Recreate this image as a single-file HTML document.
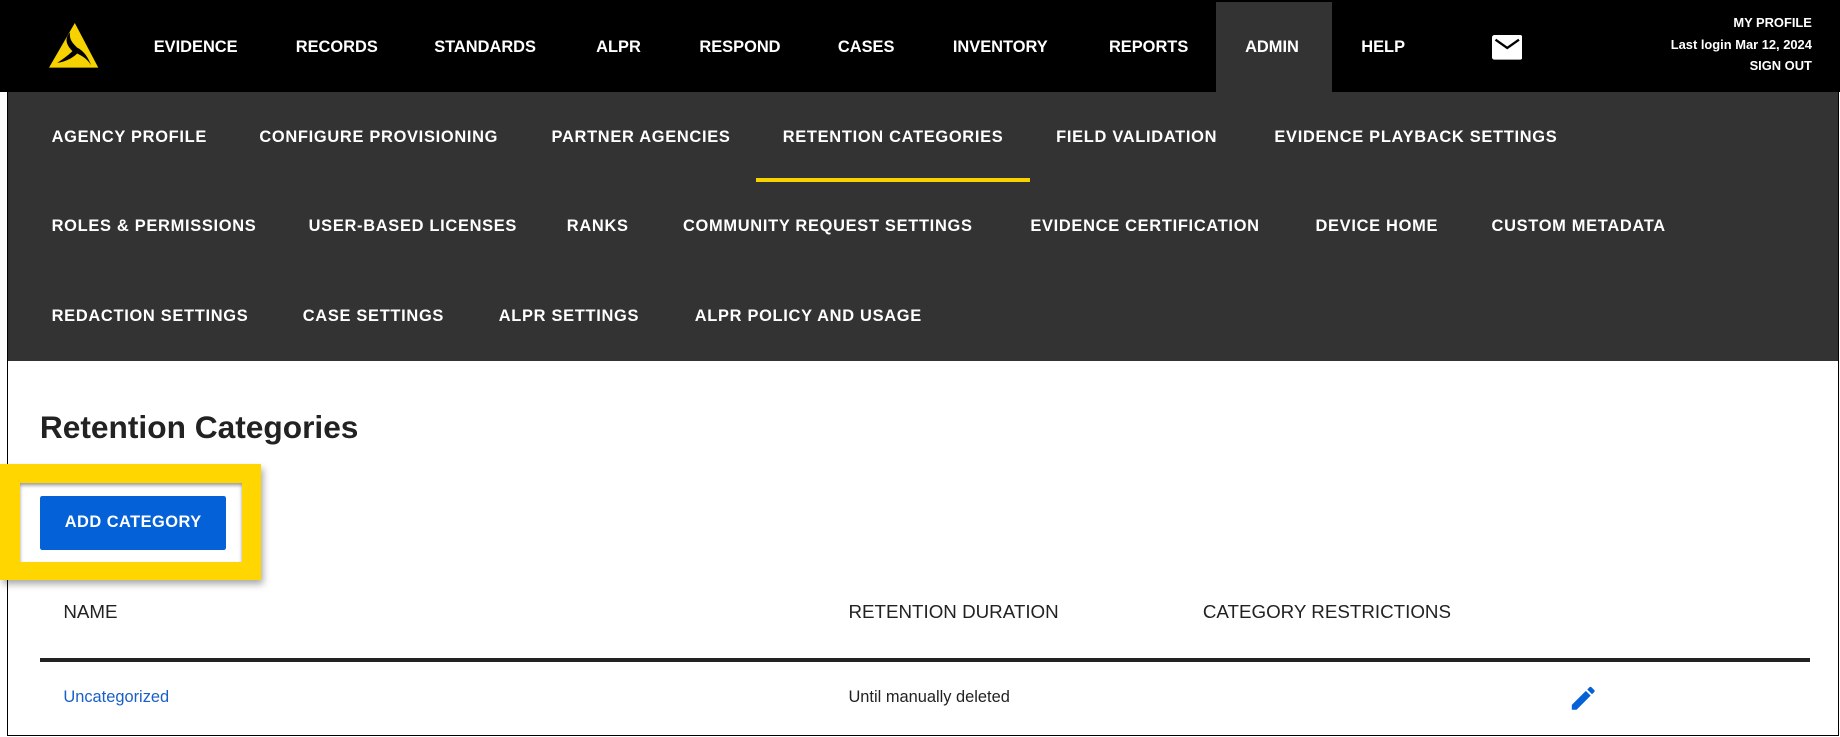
<!DOCTYPE html>
<html><head><meta charset="utf-8">
<style>
html,body{margin:0;padding:0;background:#fff;width:1840px;height:737px;overflow:hidden}
#w{zoom:1.1735;width:1568px;height:628px;position:relative;font-family:"Liberation Sans",Arial,sans-serif}
.abs{position:absolute;white-space:nowrap}
#top{position:absolute;left:0;top:0;width:1568px;height:78px;background:#000}
.tn{position:absolute;top:32px;color:#fff;font-weight:bold;font-size:14px;line-height:16px}
#admin{position:absolute;left:1036px;top:2px;width:99px;height:76px;background:#333}
#sub{position:absolute;left:7px;top:78px;width:1559px;height:230px;background:#333}
.sn{position:absolute;color:#fff;font-weight:bold;font-size:14px;letter-spacing:.6px;line-height:16px}
#frame{position:absolute;left:6px;top:0;width:1559px;height:626px;border:1.5px solid #000;border-top:none}
.pr{position:absolute;right:24px;color:#fff;font-weight:bold;font-size:11px;line-height:12px;text-align:right}
</style></head><body><div id="w">
<div id="frame"></div>
<div id="top"></div>
<div id="admin"></div>
<svg class="abs" style="left:42px;top:20px" width="42" height="38" viewBox="0 0 42 38">
<polygon points="22,0 0,38 42,38" fill="#f6d200"/>
<path d="M18,8 C12,14 16,20 20,24 C16,28 10,32 7,34 C14,33 20,30 24,26 C28,28 32,30 36,36 C33,29 30,24 24,21 C20,17 17,14 18,8 Z" fill="#000"/>
</svg>
<div class="tn" style="left:131px">EVIDENCE</div>
<div class="tn" style="left:252px">RECORDS</div>
<div class="tn" style="left:370px">STANDARDS</div>
<div class="tn" style="left:508px">ALPR</div>
<div class="tn" style="left:596px">RESPOND</div>
<div class="tn" style="left:714px">CASES</div>
<div class="tn" style="left:812px">INVENTORY</div>
<div class="tn" style="left:945px">REPORTS</div>
<div class="tn" style="left:1061px">ADMIN</div>
<div class="tn" style="left:1160px">HELP</div>
<svg class="abs" style="left:1271px;top:30px" width="26" height="21" viewBox="0 0 26 21"><rect width="26" height="21" rx="2" fill="#fff"/><path d="M3,4 L13,11 L23,4" stroke="#000" stroke-width="2" fill="none"/></svg>
<div class="pr" style="top:14px">MY PROFILE</div>
<div class="pr" style="top:32px">Last login Mar 12, 2024</div>
<div class="pr" style="top:50px">SIGN OUT</div>
<div id="sub"></div>
<div class="sn" style="left:44px;top:109px">AGENCY PROFILE</div>
<div class="sn" style="left:221px;top:109px">CONFIGURE PROVISIONING</div>
<div class="sn" style="left:470px;top:109px">PARTNER AGENCIES</div>
<div class="sn" style="left:667px;top:109px">RETENTION CATEGORIES</div>
<div class="sn" style="left:900px;top:109px">FIELD VALIDATION</div>
<div class="sn" style="left:1086px;top:109px">EVIDENCE PLAYBACK SETTINGS</div>
<div class="abs" style="left:644px;top:152px;width:234px;height:3px;background:#f6d200"></div>
<div class="sn" style="left:44px;top:185px">ROLES &amp; PERMISSIONS</div>
<div class="sn" style="left:263px;top:185px">USER-BASED LICENSES</div>
<div class="sn" style="left:483px;top:185px">RANKS</div>
<div class="sn" style="left:582px;top:185px">COMMUNITY REQUEST SETTINGS</div>
<div class="sn" style="left:878px;top:185px">EVIDENCE CERTIFICATION</div>
<div class="sn" style="left:1121px;top:185px">DEVICE HOME</div>
<div class="sn" style="left:1271px;top:185px">CUSTOM METADATA</div>
<div class="sn" style="left:44px;top:262px">REDACTION SETTINGS</div>
<div class="sn" style="left:258px;top:262px">CASE SETTINGS</div>
<div class="sn" style="left:425px;top:262px">ALPR SETTINGS</div>
<div class="sn" style="left:592px;top:262px">ALPR POLICY AND USAGE</div>
<div class="abs" style="left:34px;top:348px;font-size:27px;font-weight:bold;color:#222;line-height:34px">Retention Categories</div>
<div class="abs" style="left:0;top:395px;width:222px;height:99px;background:#ffd600;box-shadow:2px 4px 6px rgba(0,0,0,.35)"></div>
<div class="abs" style="left:17px;top:412px;width:189px;height:67px;background:#fff;box-shadow:inset 0 2px 3px rgba(0,0,0,.4)"></div>
<div class="abs" style="left:34px;top:423px;width:159px;height:46px;background:#0561d8;border-radius:2px;color:#fff;font-weight:bold;font-size:14px;line-height:46px;text-align:center;letter-spacing:.4px">ADD CATEGORY</div>
<div class="abs" style="left:54px;top:512px;font-size:16px;color:#222">NAME</div>
<div class="abs" style="left:723px;top:512px;font-size:16px;color:#222">RETENTION DURATION</div>
<div class="abs" style="left:1025px;top:512px;font-size:16px;color:#222">CATEGORY RESTRICTIONS</div>
<div class="abs" style="left:34px;top:561px;width:1508px;height:3px;background:#222"></div>
<div class="abs" style="left:54px;top:586px;font-size:14px;color:#1a5fc7">Uncategorized</div>
<div class="abs" style="left:723px;top:586px;font-size:14px;color:#222">Until manually deleted</div>
<svg class="abs" style="left:1336px;top:582px" width="26" height="26" viewBox="0 0 24 24"><path d="M3 17.25V21h3.75L17.81 9.94l-3.75-3.75L3 17.25zM20.71 7.04a1 1 0 0 0 0-1.41l-2.34-2.34a1 1 0 0 0-1.41 0l-1.83 1.83 3.75 3.75 1.83-1.83z" fill="#0561d8"/></svg>
</div></body></html>
